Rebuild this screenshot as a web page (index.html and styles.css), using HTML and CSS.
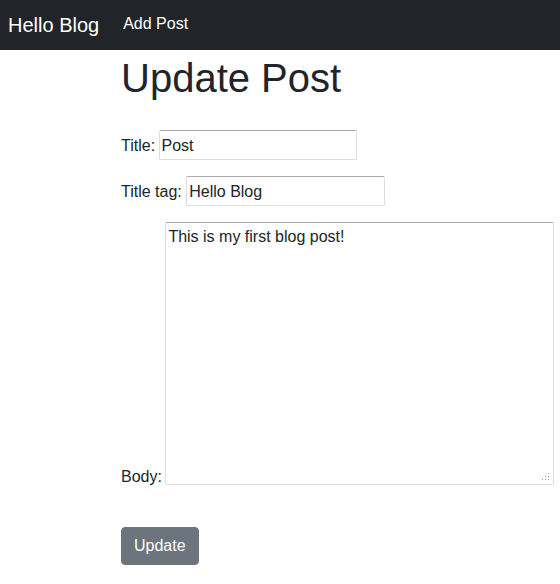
FILE: index.html
```html
<!doctype html>
<html>

<head>
    <link rel="stylesheet" href="styles.css">
</head>

<body>
    <nav class="navbar">
        <a class="brand" href="#">Hello Blog</a>
        <a class="nav-link" href="#">Add Post</a>
    </nav>
    <div class="container">
        <h1>Update Post</h1>
        <form class="post-form">
            <p><label for="title">Title:</label> <input type="text" id="title" class="short" value="Post"></p>
            <p><label for="title_tag">Title tag:</label> <input type="text" id="title_tag" class="short" value="Hello Blog"></p>
            <p class="body-row"><label for="body">Body:</label> <span class="body-wrap"><textarea id="body" class="body-box">This is my first blog post!</textarea><svg class="grip" width="9" height="9" viewBox="0 0 9 9"><rect x="7" y="1" width="1" height="1"/><rect x="4" y="4" width="1" height="1"/><rect x="7" y="4" width="1" height="1"/><rect x="1" y="7" width="1" height="1"/><rect x="4" y="7" width="1" height="1"/><rect x="7" y="7" width="1" height="1"/></svg></span></p>
            <button class="btn" type="submit">Update</button>
        </form>
    </div>
</body>

</html>
```

FILE: styles.css
```css
body,
html {
    margin: 0;
    padding: 0;
    font-family: "Liberation Sans", Arial, Helvetica, sans-serif;
    font-size: 16px;
    line-height: 1.5;
    color: #212529;
    background-color: #fff;
}

a {
    text-decoration: none;
}

.navbar {
    display: flex;
    align-items: center;
    height: 50px;
    padding: 0 8px;
    background-color: #212529;
}

.navbar .brand {
    font-size: 20px;
    line-height: 30px;
    color: #fff;
    margin-right: 16px;
}

.navbar .nav-link {
    font-size: 16px;
    line-height: 24px;
    color: #fff;
    padding: 0 8px;
    margin-top: -3px;
}

.container {
    padding-left: 121px;
}

h1 {
    font-size: 40px;
    font-weight: 400;
    line-height: 48px;
    margin: 4px 0 28px 0;
}

.post-form p {
    margin: 0 0 16px 0;
}

.post-form .body-row {
    white-space: nowrap;
}

.post-form input,
.post-form textarea {
    font-family: inherit;
    font-size: inherit;
    line-height: inherit;
    color: #212529;
    box-sizing: border-box;
    border: 1px solid #dcdce2;
    border-top-color: #a9a9a9;
    border-radius: 2px;
    margin: 0;
}

.post-form input.short {
    width: 198px;
    height: 30px;
    padding: 3px 2px 1px 2px;
}

#title {
    margin-left: -1px;
}

#title_tag {
    width: 199px;
}

.body-wrap {
    position: relative;
    display: inline-block;
    vertical-align: -3px;
    margin-left: -1px;
}

.post-form textarea.body-box {
    display: block;
    width: 389px;
    height: 263px;
    padding: 2px 2px;
    resize: none;
    white-space: pre-wrap;
}

.grip {
    position: absolute;
    right: 4px;
    bottom: 4px;
    fill: #9a9a9a;
}

.btn {
    font-family: inherit;
    font-size: 16px;
    line-height: 24px;
    color: #fff;
    background-color: #6c757d;
    border: 1px solid #6c757d;
    border-radius: 4px;
    padding: 6px 12px;
    margin-top: 22px;
    cursor: pointer;
}
```
